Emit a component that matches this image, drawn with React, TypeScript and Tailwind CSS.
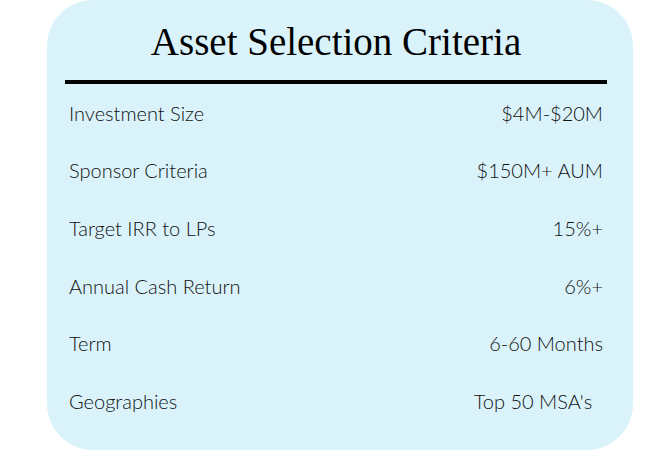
const rows = [
  { label: 'Investment Size', value: '$4M-$20M' },
  { label: 'Sponsor Criteria', value: '$150M+ AUM' },
  { label: 'Target IRR to LPs', value: '15%+' },
  { label: 'Annual Cash Return', value: '6%+' },
  { label: 'Term', value: '6-60 Months' },
  { label: 'Geographies', value: "Top 50 MSA's\u00a0\u00a0" },
];

export default function App() {
  return (
    <div className="w-[670px] h-[452px] bg-white">
      <div className="ml-[47px] w-[586px] h-[450px] rounded-[46px] bg-[#daf3fb] pl-[18px] pr-[26px]">
        <h1 className="pt-[16px] h-[80px] text-center text-[39px] leading-[52px] text-black font-['Liberation_Serif',serif]">
          Asset Selection Criteria
        </h1>
        <div className="h-[4px] bg-black" />
        <div className="flex flex-col font-['Lato',sans-serif] font-light text-[20px] text-[#111]">
          {rows.map((r) => (
            <div key={r.label} className="flex items-center justify-between h-[57.6px] px-[4px]">
              <span>{r.label}</span>
              <span className="whitespace-pre">{r.value}</span>
            </div>
          ))}
        </div>
      </div>
    </div>
  );
}
